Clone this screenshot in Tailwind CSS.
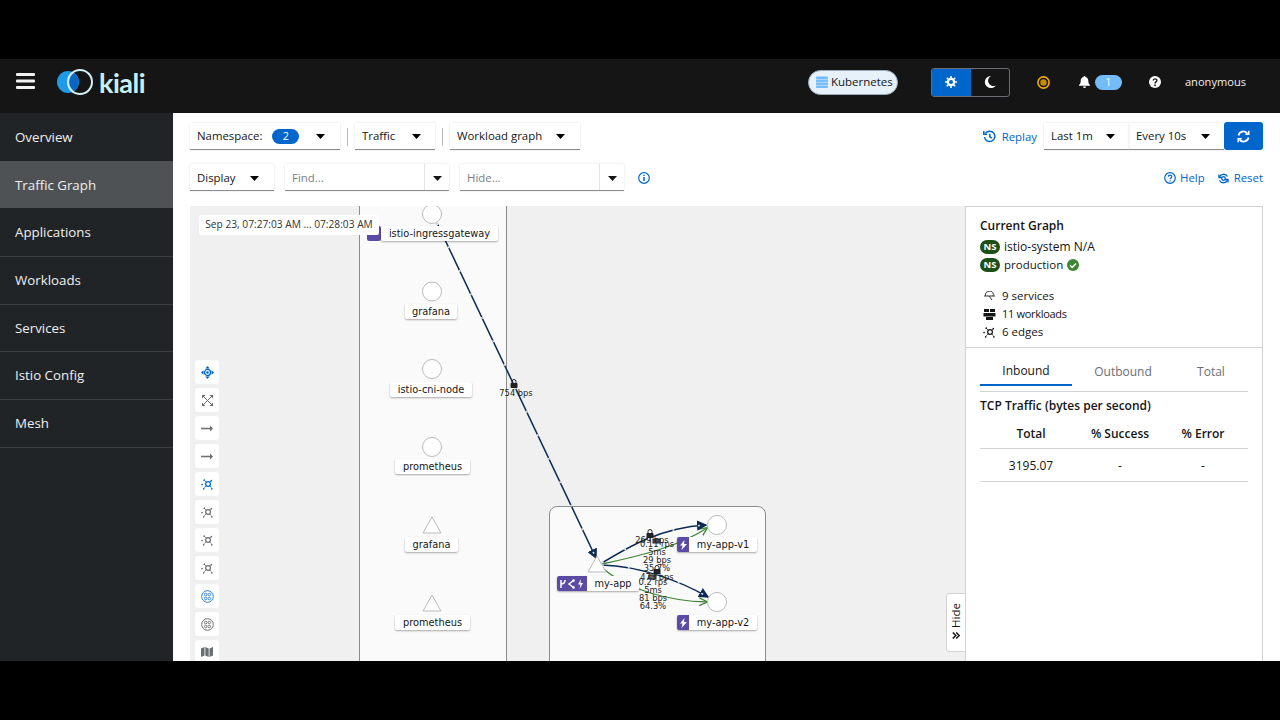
<!DOCTYPE html>
<html lang="en">
  <head>
    <meta charset="UTF-8" />
    <title>Kiali</title>
    <script src="https://cdn.jsdelivr.net/npm/@tailwindcss/browser@4"></script>
  </head>
  <body class="bg-black w-[1280px] h-[720px] overflow-hidden font-['Open_Sans',sans-serif] text-[#151515]">
    <div class="mt-[59px] h-[602px] flex flex-col overflow-hidden">
      <!-- Masthead -->
      <header class="h-[54px] shrink-0 bg-[#151515] flex items-center text-white pb-[8px]">
        <svg class="ml-[16px] -mt-[2px] w-[19px] h-[16px]" viewBox="0 0 19 16" fill="#f2f2f2"><rect width="19" height="3" rx="1"/><rect y="6.500" width="19" height="3" rx="1"/><rect y="13" width="19" height="3" rx="1"/></svg>
        <svg class="ml-[21px] w-[38px] h-[28px]" viewBox="0 0 38 28">
          <circle cx="12" cy="14" r="11" fill="#1e9be8"/>
          <path d="M18 5a11 11 0 0 1 0 18a11 11 0 0 1 0-18z" fill="#0a66c2"/>
          <circle cx="24" cy="14" r="12" fill="none" stroke="#d3f1f7" stroke-width="2"/>
        </svg>
        <span class="ml-[5px] text-[27px] leading-none font-bold text-[#c8f0f8] tracking-[-0.5px] font-['Lato',sans-serif]">kiali</span>
        <div class="ml-auto flex items-center">
          <div class="w-[90px] h-[25px] rounded-full bg-[#e7f1fa] border border-[#9ab] flex items-center pl-[7px] gap-[3px] text-[#151515] text-[11.500px]">
            <svg class="w-[12px] h-[12px]" viewBox="0 0 12 12" fill="#73bcf7"><rect width="12" height="2.400" y="0.500" rx="1"/><rect width="12" height="2.400" y="3.500"/><rect width="12" height="2.400" y="6.500"/><rect width="12" height="2.400" y="9.500" rx="1"/></svg>
            Kubernetes
          </div>
          <div class="ml-[33px] w-[79px] h-[29px] flex rounded-[3px] border border-[#6a6e73] overflow-hidden">
            <div class="w-[39px] bg-[#0066cc] flex items-center justify-center">
              <svg class="w-[12px] h-[12px]" viewBox="0 0 12 12"><circle cx="6" cy="6" r="3.200" fill="none" stroke="#fff" stroke-width="2"/><path d="M6 0v12M0 6h12M1.800 1.800l8.400 8.400M10.200 1.800l-8.400 8.400" stroke="#fff" stroke-width="1.600"/><circle cx="6" cy="6" r="2" fill="#0066cc"/></svg>
            </div>
            <div class="flex-1 flex items-center justify-center">
              <svg class="w-[12px] h-[12px]" viewBox="0 0 12 12"><path d="M7 0a6 6 0 1 0 4.800 9.400A5 5 0 0 1 7 0z" fill="#fff"/></svg>
            </div>
          </div>
          <svg class="ml-[27px] w-[13px] h-[13px]" viewBox="0 0 13 13"><circle cx="6.500" cy="6.500" r="5.600" fill="none" stroke="#f0ab00" stroke-width="1.600"/><circle cx="6.500" cy="6.500" r="3.200" fill="#c58c00"/></svg>
          <svg class="ml-[29px] w-[11px] h-[12px]" viewBox="0 0 11 12" fill="#fff"><path d="M5.500 0a1 1 0 0 1 1 1c2 .4 2.800 2 2.800 4 0 2 .7 3 1.700 4v.8H0V9c1-1 1.700-2 1.700-4 0-2 .8-3.600 2.800-4a1 1 0 0 1 1-1zM4 10.500h3a1.500 1.500 0 0 1-3 0z"/></svg>
          <span class="ml-[5px] w-[27px] h-[15px] rounded-full bg-[#73bcf7] text-white text-[10px] flex items-center justify-center">1</span>
          <svg class="ml-[27px] w-[12px] h-[12px]" viewBox="0 0 12 12"><circle cx="6" cy="6" r="6" fill="#fff"/><path d="M4.200 4.600c0-2.300 3.700-2.300 3.700-.1 0 1.400-1.900 1.400-1.900 3" fill="none" stroke="#151515" stroke-width="1.400"/><rect x="5.200" y="8.500" width="1.600" height="1.600" fill="#151515"/></svg>
          <span class="ml-[24px] mr-[34px] text-[11.100px] text-[#f0f0f0]">anonymous</span>
        </div>
      </header>

      <div class="flex-1 flex min-h-0">
        <!-- Sidebar -->
        <nav class="w-[173px] shrink-0 bg-[#212427] text-[13.300px] text-[#f0f0f0]">
          <div class="h-[48px] pl-[15px] pt-[2px] flex items-center">Overview</div>
          <div class="h-[47px] pl-[15px] pt-[2px] flex items-center bg-[#4f5255]">Traffic Graph</div>
          <div class="h-[49px] pl-[15px] pt-[2px] flex items-center border-b border-[#3c3f42]">Applications</div>
          <div class="h-[48px] pl-[15px] pt-[1px] flex items-center border-b border-[#3c3f42]">Workloads</div>
          <div class="h-[47px] pl-[15px] pt-[1px] flex items-center border-b border-[#3c3f42]">Services</div>
          <div class="h-[48px] pl-[15px] pt-[1px] flex items-center border-b border-[#3c3f42]">Istio Config</div>
          <div class="h-[48px] pl-[15px] pt-[1px] flex items-center border-b border-[#3c3f42]">Mesh</div>
        </nav>

        <main class="flex-1 bg-white flex flex-col pl-[17px] pr-[17px] min-w-0">
          <!-- Toolbar row 1 -->
          <div class="h-[27px] mt-[10px] flex items-stretch text-[11.400px]">
            <div class="w-[150px] border-b border-[#8a8d90] shadow-[0_0_2px_#ddd] flex items-center pl-[7px]">
              Namespace:
              <span class="ml-[10px] w-[27px] h-[15px] rounded-full bg-[#0066cc] text-white text-[11px] flex items-center justify-center">2</span>
              <svg class="ml-[17px] w-[9px] h-[5px]" viewBox="0 0 9 5"><path d="M0 0h9L4.500 5z"/></svg>
            </div>
            <div class="ml-[7px] mr-[7px] w-px h-[18px] self-center bg-[#b8bbbe]"></div>
            <div class="w-[80px] border-b border-[#8a8d90] shadow-[0_0_2px_#ddd] flex items-center pl-[7px]">
              Traffic
              <svg class="ml-auto mr-[14px] w-[9px] h-[5px]" viewBox="0 0 9 5"><path d="M0 0h9L4.500 5z"/></svg>
            </div>
            <div class="ml-[7px] mr-[7px] w-px h-[18px] self-center bg-[#b8bbbe]"></div>
            <div class="w-[130px] border-b border-[#8a8d90] shadow-[0_0_2px_#ddd] flex items-center pl-[7px]">
              Workload graph
              <svg class="ml-auto mr-[15px] w-[9px] h-[5px]" viewBox="0 0 9 5"><path d="M0 0h9L4.500 5z"/></svg>
            </div>
            <div class="ml-auto flex items-center text-[#0066cc] gap-[6px] mr-[7px]">
              <svg class="w-[13px] h-[13px]" viewBox="0 0 13 13" fill="none" stroke="#0066cc" stroke-width="1.500"><path d="M2.500 3.200A5.200 5.200 0 1 1 1.500 7"/><path d="M.8 1v3.200H4" /><path d="M6.800 3.800v3l2 1.200"/></svg>
              Replay
            </div>
            <div class="w-[85px] border-b border-[#8a8d90] shadow-[0_0_2px_#ddd] flex items-center pl-[7px]">
              Last 1m
              <svg class="ml-auto mr-[14px] w-[9px] h-[5px]" viewBox="0 0 9 5"><path d="M0 0h9L4.500 5z"/></svg>
            </div>
            <div class="w-[95px] border-b border-[#8a8d90] shadow-[0_0_2px_#ddd] flex items-center pl-[7px]">
              Every 10s
              <svg class="ml-auto mr-[14px] w-[9px] h-[5px]" viewBox="0 0 9 5"><path d="M0 0h9L4.500 5z"/></svg>
            </div>
            <div class="w-[39px] -mt-[1px] bg-[#0066cc] rounded-[3px] flex items-center justify-center">
              <svg class="w-[13px] h-[13px]" viewBox="0 0 13 13" fill="none" stroke="#fff" stroke-width="1.800"><path d="M1.500 5.500A5 5 0 0 1 10.500 3.500"/><path d="M11.500 7.500A5 5 0 0 1 2.500 9.500"/><path d="M11.800 .8v3.500H8.300" stroke-width="1.500"/><path d="M1.200 12.200V8.700h3.500" stroke-width="1.500"/></svg>
            </div>
          </div>

          <!-- Toolbar row 2 -->
          <div class="h-[27px] mt-[14px] flex items-stretch text-[11.400px]">
            <div class="w-[84px] border-b border-[#8a8d90] shadow-[0_0_2px_#ddd] flex items-center pl-[7px] pt-[2px]">
              Display
              <svg class="ml-auto mr-[15px] w-[9px] h-[5px]" viewBox="0 0 9 5"><path d="M0 0h9L4.500 5z"/></svg>
            </div>
            <div class="ml-[11px] w-[164px] border-b border-[#8a8d90] shadow-[0_0_2px_#ddd] flex items-center pl-[7px] text-[#7b7e81]">
              <span class="pt-[2px]">Find...</span>
              <div class="ml-auto w-[25px] h-full border-l border-[#e4e4e4] flex items-center justify-center pt-[2px]">
                <svg class="w-[9px] h-[5px]" viewBox="0 0 9 5"><path d="M0 0h9L4.500 5z" fill="#151515"/></svg>
              </div>
            </div>
            <div class="ml-[11px] w-[164px] border-b border-[#8a8d90] shadow-[0_0_2px_#ddd] flex items-center pl-[7px] text-[#7b7e81]">
              <span class="pt-[2px]">Hide...</span>
              <div class="ml-auto w-[25px] h-full border-l border-[#e4e4e4] flex items-center justify-center pt-[2px]">
                <svg class="w-[9px] h-[5px]" viewBox="0 0 9 5"><path d="M0 0h9L4.500 5z" fill="#151515"/></svg>
              </div>
            </div>
            <svg class="ml-[14px] self-center mt-[1px] w-[12px] h-[12px]" viewBox="0 0 12 12" fill="none" stroke="#0066cc" stroke-width="1.200"><circle cx="6" cy="6" r="5.300"/><path d="M6 5v4M6 2.800v1.200" stroke-width="1.500"/></svg>
            <div class="ml-auto flex items-center gap-[4px] text-[#0066cc] pt-[1px]">
              <svg class="w-[12px] h-[12px]" viewBox="0 0 12 12" fill="none" stroke="#0066cc" stroke-width="1.200"><circle cx="6" cy="6" r="5.300"/><path d="M4.300 4.700c0-2.200 3.500-2.200 3.500-.1 0 1.300-1.800 1.300-1.800 2.600M6 8.200v1.200"/></svg>
              Help
              <svg class="ml-[8px] w-[13px] h-[13px]" viewBox="0 0 13 13" fill="none" stroke="#0066cc" stroke-width="1.300"><path d="M2 2.500v3h3M11 10.500v-3H8"/><path d="M2.300 5.500A4.500 4.500 0 0 1 10.500 4.500M10.700 7.500A4.500 4.500 0 0 1 2.500 8.500"/><circle cx="6.500" cy="6.500" r="1.800"/></svg>
              Reset
            </div>
          </div>

          <!-- Graph + side panel -->
          <div class="mt-[15px] flex-1 flex min-h-0">
            <div class="relative flex-1 bg-[#f0f0f0] overflow-hidden">
              <!-- namespace boxes -->
              <div class="absolute left-[169px] top-[-20px] w-[148px] h-[600px] bg-[#fafafa] border-x-[1.500px] border-[#8a8d90]"></div>
              <div class="absolute left-[359px] top-[300px] w-[217px] h-[300px] bg-[#fafafa] border-[1.500px] border-[#8a8d90] rounded-[8px]"></div>

              <!-- edges and nodes -->
              <svg class="absolute left-0 top-0 w-[775px] h-[455px]" viewBox="0 0 775 455">
                <defs>
                  <marker id="navy" markerWidth="7" markerHeight="7" refX="6" refY="3.500" orient="auto"><path d="M0 0L7 3.500L0 7z" fill="#0b2a52"/></marker>
                  <marker id="green" markerWidth="7" markerHeight="7" refX="6" refY="3.500" orient="auto"><path d="M0 .5L6.500 3.500L0 6.500" fill="none" stroke="#3e8635"/></marker>
                </defs>
                <path d="M247 17L406 352" stroke="#0b2a52" stroke-width="1.500" fill="none" marker-end="url(#navy)"/>
                <path d="M412 358C450 350 490 340 517 322" stroke="#3e8635" stroke-width="1.300" fill="none" marker-end="url(#green)"/>
                <path d="M412 362C440 385 480 395 517 396" stroke="#3e8635" stroke-width="1.300" fill="none" marker-end="url(#green)"/>
                <path d="M412 357C440 340 470 322 516 319" stroke="#0b2a52" stroke-width="1.500" fill="none" marker-end="url(#navy)"/>
                <path d="M412 359C450 360 490 375 518 391" stroke="#0b2a52" stroke-width="1.500" fill="none" marker-end="url(#navy)"/>
                <!-- moving traffic dots -->
                <g fill="none" stroke="#dfe5ee" stroke-width="1.500" stroke-dasharray="2 24">
                  <path d="M247 17L406 352"/>
                  <path d="M412 357C440 340 470 322 516 319"/>
                  <path d="M412 359C450 360 490 375 518 391"/>
                </g>
                <g fill="#fff" stroke="#b8bbbe">
                  <circle cx="242" cy="8" r="9.500"/>
                  <circle cx="242" cy="85.500" r="9.500"/>
                  <circle cx="242" cy="163" r="9.500"/>
                  <circle cx="242" cy="241" r="9.500"/>
                  <path d="M242 311l9 16h-18z"/>
                  <path d="M242 389l9 16h-18z"/>
                  <path d="M407 350l9 16h-18z"/>
                  <circle cx="527" cy="319" r="9.500"/>
                  <circle cx="527" cy="396" r="9.500"/>
                </g>
              </svg>

              <!-- node labels -->
              <div class="font-['DejaVu_Sans',sans-serif] text-[9.800px] text-[#151515]">
                <div class="absolute left-[177px] top-[20px] w-[14px] h-[15px] rounded-[2px] bg-[#5c4ba5]"></div>
                <div class="absolute left-[191px] top-[20px] w-[117px] h-[15px] pt-[1px] bg-white rounded-[2px] shadow-[0_1px_2px_#0005] flex items-center justify-center">istio-ingressgateway</div>
                <div class="absolute left-[215px] top-[98px] w-[52px] h-[15px] pt-[1px] bg-white rounded-[2px] shadow-[0_1px_2px_#0005] flex items-center justify-center">grafana</div>
                <div class="absolute left-[200px] top-[176px] w-[82px] h-[15px] pt-[1px] bg-white rounded-[2px] shadow-[0_1px_2px_#0005] flex items-center justify-center">istio-cni-node</div>
                <div class="absolute left-[205px] top-[253px] w-[75px] h-[15px] pt-[1px] bg-white rounded-[2px] shadow-[0_1px_2px_#0005] flex items-center justify-center">prometheus</div>
                <div class="absolute left-[215px] top-[331px] w-[53px] h-[15px] pt-[1px] bg-white rounded-[2px] shadow-[0_1px_2px_#0005] flex items-center justify-center">grafana</div>
                <div class="absolute left-[205px] top-[409px] w-[75px] h-[15px] pt-[1px] bg-white rounded-[2px] shadow-[0_1px_2px_#0005] flex items-center justify-center">prometheus</div>
                <!-- my-app -->
                <div class="absolute left-[367px] top-[370px] w-[82px] h-[15px] bg-white rounded-[2px] shadow-[0_1px_2px_#0005] flex items-center">
                  <span class="w-[30px] h-full bg-[#5c4ba5] rounded-l-[2px] flex items-center justify-center">
                    <svg class="w-[26px] h-[10px]" viewBox="0 0 26 10" fill="#fff" stroke="#fff" stroke-width="1.500"><path d="M2 1v8M6 1c0 3-1 4-4 4" fill="none"/><path d="M14.500 1.500L10 5l4.500 3.500" fill="none"/><circle cx="14.500" cy="1.500" r=".6"/><circle cx="14.500" cy="8.500" r=".6"/><path d="M22 0l-3 5.500h2.500l-1 4.500l3.500-6h-2.500z" stroke="none"/></svg>
                  </span>
                  <span class="flex-1 text-center pt-[1px]">my-app</span>
                </div>
                <div class="absolute left-[487px] top-[331px] w-[80px] h-[15px] bg-white rounded-[2px] shadow-[0_1px_2px_#0005] flex items-center">
                  <span class="w-[12px] h-full bg-[#5c4ba5] rounded-l-[2px] flex items-center justify-center">
                    <svg class="w-[7px] h-[10px]" viewBox="0 0 7 10"><path d="M4.500 0L0 5.500h2.500L1.500 10L7 4H4z" fill="#fff"/></svg>
                  </span>
                  <span class="flex-1 text-center pt-[1px]">my-app-v1</span>
                </div>
                <div class="absolute left-[487px] top-[409px] w-[80px] h-[15px] bg-white rounded-[2px] shadow-[0_1px_2px_#0005] flex items-center">
                  <span class="w-[12px] h-full bg-[#5c4ba5] rounded-l-[2px] flex items-center justify-center">
                    <svg class="w-[7px] h-[10px]" viewBox="0 0 7 10"><path d="M4.500 0L0 5.500h2.500L1.500 10L7 4H4z" fill="#fff"/></svg>
                  </span>
                  <span class="flex-1 text-center pt-[1px]">my-app-v2</span>
                </div>
              </div>

              <!-- edge lock icons -->
              <svg class="absolute left-0 top-0 w-[775px] h-[455px]" viewBox="0 0 775 455">
                <g fill="#222" stroke="#222">
                  <rect x="320.500" y="177" width="7" height="5" rx=".8" stroke="none"/><path d="M322 177v-1.500a2 2 0 0 1 4 0v1.500" fill="none"/>
                  <rect x="456.500" y="327" width="7" height="5" rx=".8" stroke="none"/><path d="M458 327v-1.500a2 2 0 0 1 4 0v1.500" fill="none"/>
                  <rect x="463" y="333" width="7" height="4" stroke="#222" fill="#666"/>
                  <rect x="463.500" y="363" width="7" height="5" rx=".8" stroke="none"/><path d="M465 363v-1.500a2 2 0 0 1 4 0v1.500" fill="none"/>
                  <rect x="459" y="369" width="7" height="4" stroke="#222" fill="#666"/>
                </g>
              </svg>

              <!-- edge labels -->
              <div class="font-['DejaVu_Sans',sans-serif] text-[8.300px] leading-[8px] text-[#222] text-center">
                <div class="absolute left-[301px] top-[183px] w-[50px]">754 bps</div>
                <div class="absolute left-[437px] top-[330px] w-[50px]">269 bps</div>
                <div class="absolute left-[442px] top-[334px] w-[50px]">0.11 rps<br />5ms<br />29 bps<br />35.7%</div>
                <div class="absolute left-[442px] top-[367px] w-[50px]">473 bps</div>
                <div class="absolute left-[438px] top-[372px] w-[50px]">0.2 rps<br />5ms<br />81 bps<br />64.3%</div>
              </div>

              <!-- time range tag -->
              <div class="absolute left-[9px] top-[9px] w-[180px] h-[20px] bg-white rounded-[2px] text-[10.200px] flex items-center justify-center text-[#333]">Sep 23, 07:27:03 AM ... 07:28:03 AM</div>

              <!-- graph toolbar -->
              <div class="absolute left-[5px] top-[154px] flex flex-col gap-[4px]">
                <div class="w-[24px] h-[24px] bg-white rounded-[3px] flex items-center justify-center">
                  <svg class="w-[13px] h-[13px]" viewBox="0 0 12 12" fill="#06c"><path d="M6 0l2 2.300H4zM6 12l2-2.300H4zM0 6l2.300-2v4zM12 6l-2.300-2v4z"/><circle cx="6" cy="6" r="2.800" fill="none" stroke="#06c" stroke-width="1.200"/><circle cx="6" cy="6" r="1.200"/></svg>
                </div>
                <div class="w-[24px] h-[24px] bg-white rounded-[3px] flex items-center justify-center">
                  <svg class="w-[11px] h-[11px]" viewBox="0 0 11 11" fill="#6a6e73" stroke="#6a6e73"><path d="M1 1l9 9M10 1L1 10" stroke-width="1"/><path d="M0 0h3.500L0 3.500zM11 0H7.500L11 3.500zM0 11h3.500L0 7.500zM11 11H7.500L11 7.500z" stroke="none"/></svg>
                </div>
                <div class="w-[24px] h-[24px] bg-white rounded-[3px] flex items-center justify-center">
                  <svg class="w-[12px] h-[7px]" viewBox="0 0 12 7" fill="#6a6e73"><path d="M0 2.700h9V.5L12 3.500L9 6.500V4.300H0z"/></svg>
                </div>
                <div class="w-[24px] h-[24px] bg-white rounded-[3px] flex items-center justify-center">
                  <svg class="w-[12px] h-[7px]" viewBox="0 0 12 7" fill="#6a6e73"><path d="M0 2.700h9V.5L12 3.500L9 6.500V4.300H0z"/></svg>
                </div>
                <div class="w-[24px] h-[24px] bg-white rounded-[3px] flex items-center justify-center">
                  <svg class="w-[13px] h-[13px]" viewBox="0 0 12 12" fill="#06c" stroke="#06c"><circle cx="6.500" cy="5.500" r="2.200" fill="none" stroke-width="1.100"/><path d="M5 4L3.500 2.500M8 4L9 3M5 7L3 9M8 7L9.500 9" stroke-width=".7"/><circle cx="3" cy="2" r=".8" stroke="none"/><circle cx="9.500" cy="2.500" r=".8" stroke="none"/><circle cx="1" cy="6" r=".8" stroke="none"/><circle cx="2.500" cy="10" r=".8" stroke="none"/><circle cx="10" cy="10" r=".8" stroke="none"/></svg>
                </div>
                <div class="w-[24px] h-[24px] bg-white rounded-[3px] flex items-center justify-center">
                  <svg class="w-[13px] h-[13px]" viewBox="0 0 12 12" fill="#6a6e73" stroke="#6a6e73"><circle cx="6.500" cy="5.500" r="2.200" fill="none" stroke-width="1.100"/><path d="M5 4L3.500 2.500M8 4L9 3M5 7L3 9M8 7L9.500 9" stroke-width=".7"/><circle cx="3" cy="2" r=".8" stroke="none"/><circle cx="9.500" cy="2.500" r=".8" stroke="none"/><circle cx="1" cy="6" r=".8" stroke="none"/><circle cx="2.500" cy="10" r=".8" stroke="none"/><circle cx="10" cy="10" r=".8" stroke="none"/></svg>
                </div>
                <div class="w-[24px] h-[24px] bg-white rounded-[3px] flex items-center justify-center">
                  <svg class="w-[13px] h-[13px]" viewBox="0 0 12 12" fill="#6a6e73" stroke="#6a6e73"><circle cx="6.500" cy="5.500" r="2.200" fill="none" stroke-width="1.100"/><path d="M5 4L3.500 2.500M8 4L9 3M5 7L3 9M8 7L9.500 9" stroke-width=".7"/><circle cx="3" cy="2" r=".8" stroke="none"/><circle cx="9.500" cy="2.500" r=".8" stroke="none"/><circle cx="1" cy="6" r=".8" stroke="none"/><circle cx="2.500" cy="10" r=".8" stroke="none"/><circle cx="10" cy="10" r=".8" stroke="none"/></svg>
                </div>
                <div class="w-[24px] h-[24px] bg-white rounded-[3px] flex items-center justify-center">
                  <svg class="w-[13px] h-[13px]" viewBox="0 0 12 12" fill="#6a6e73" stroke="#6a6e73"><circle cx="6.500" cy="5.500" r="2.200" fill="none" stroke-width="1.100"/><path d="M5 4L3.500 2.500M8 4L9 3M5 7L3 9M8 7L9.500 9" stroke-width=".7"/><circle cx="3" cy="2" r=".8" stroke="none"/><circle cx="9.500" cy="2.500" r=".8" stroke="none"/><circle cx="1" cy="6" r=".8" stroke="none"/><circle cx="2.500" cy="10" r=".8" stroke="none"/><circle cx="10" cy="10" r=".8" stroke="none"/></svg>
                </div>
                <div class="w-[24px] h-[24px] bg-white rounded-[3px] flex items-center justify-center">
                  <svg class="w-[13px] h-[13px]" viewBox="0 0 13 13" fill="none" stroke="#2b7fd0"><circle cx="6.500" cy="6.500" r="5.800"/><g fill="none" stroke-width=".9"><circle cx="4.700" cy="4.500" r="1.300"/><circle cx="8.300" cy="4.500" r="1.300"/><circle cx="4.700" cy="8.500" r="1.300"/><circle cx="8.300" cy="8.500" r="1.300"/></g></svg>
                </div>
                <div class="w-[24px] h-[24px] bg-white rounded-[3px] flex items-center justify-center">
                  <svg class="w-[13px] h-[13px]" viewBox="0 0 13 13" fill="none" stroke="#6a6e73"><circle cx="6.500" cy="6.500" r="5.800"/><g fill="none" stroke-width=".9"><circle cx="4.700" cy="4.500" r="1.300"/><circle cx="8.300" cy="4.500" r="1.300"/><circle cx="4.700" cy="8.500" r="1.300"/><circle cx="8.300" cy="8.500" r="1.300"/></g></svg>
                </div>
                <div class="w-[24px] h-[24px] bg-white rounded-[3px] flex items-center justify-center">
                  <svg class="w-[12px] h-[10px]" viewBox="0 0 12 10" fill="#6a6e73"><path d="M0 1.500l3.500-1.500v8.500L0 10zM4.300 0l3.400 1.500V10L4.300 8.500zM8.500 1.500L12 0v8.500L8.500 10z"/></svg>
                </div>
              </div>

              <!-- hide tab -->
              <div class="absolute left-[756px] top-[387px] w-[20px] h-[59px] bg-white border border-[#d2d2d2] rounded-l-[3px] flex flex-col items-center justify-end pb-[12px] gap-[4px]">
                <span class="text-[11.500px] leading-none [writing-mode:vertical-rl] rotate-180">Hide</span>
                <svg class="w-[8px] h-[7px]" viewBox="0 0 8 7" fill="none" stroke="#151515" stroke-width="1.500"><path d="M.8.500L3.800 3.500L.8 6.500M4.200.500L7.200 3.500L4.200 6.500"/></svg>
              </div>
            </div>

            <!-- Side panel -->
            <aside class="w-[298px] shrink-0 bg-white border-x border-t border-[#d2d2d2] text-[12px] flex flex-col">
              <div class="h-[141px] px-[14px] pt-[10px] border-b border-[#d2d2d2]">
                <div class="font-semibold leading-[17px]">Current Graph</div>
                <div class="mt-[4px] flex items-center h-[18px] gap-[4px]">
                  <span class="w-[20px] h-[14px] rounded-full bg-[#1e4f18] text-white text-[9.500px] font-bold flex items-center justify-center">NS</span>
                  istio-system N/A
                </div>
                <div class="flex items-center h-[18px] gap-[4px] text-[11.500px]">
                  <span class="w-[20px] h-[14px] rounded-full bg-[#1e4f18] text-white text-[9.500px] font-bold flex items-center justify-center">NS</span>
                  production
                  <svg class="w-[12px] h-[12px]" viewBox="0 0 12 12"><circle cx="6" cy="6" r="6" fill="#3e8635"/><path d="M3 6.200l2.200 2.200L9 4.400" fill="none" stroke="#fff" stroke-width="1.500"/></svg>
                </div>
                <div class="mt-[13px] flex items-center h-[18px] gap-[6px] pl-[3px] text-[11.500px]">
                  <svg class="w-[13px] h-[10px]" viewBox="0 0 13 10" fill="none" stroke="#333"><path d="M1 5h11M2.500 5a4 4 0 0 1 8-1.500M9 9l-3-4M11 3.500l-1.500 1.500"/></svg>
                  9 services
                </div>
                <div class="flex items-center h-[18px] gap-[6px] pl-[3px] text-[11px] tracking-[-0.3px]">
                  <svg class="w-[13px] h-[12px]" viewBox="0 0 13 12" fill="#151515"><path d="M1 1h5v3H1zM7 1h5v3H7zM.5 5h12v3.500h-12zM3 9h7v3H3z"/></svg>
                  11 workloads
                </div>
                <div class="flex items-center h-[18px] gap-[6px] pl-[3px] text-[11.500px]">
                  <svg class="w-[13px] h-[13px]" viewBox="0 0 12 12" fill="#151515" stroke="#151515"><circle cx="6.500" cy="5.500" r="2.200" fill="none" stroke-width="1.100"/><path d="M5 4L3.500 2.500M8 4L9 3M5 7L3 9M8 7L9.500 9" stroke-width=".7"/><circle cx="3" cy="2" r=".8" stroke="none"/><circle cx="9.500" cy="2.500" r=".8" stroke="none"/><circle cx="1" cy="6" r=".8" stroke="none"/><circle cx="2.500" cy="10" r=".8" stroke="none"/><circle cx="10" cy="10" r=".8" stroke="none"/></svg>
                  6 edges
                </div>
              </div>

              <div class="mx-[14px] flex h-[44px] border-b border-[#d2d2d2] text-center">
                <div class="w-[92px] flex items-center justify-center border-b-[2px] border-[#0066cc] h-[38px] pt-[9px]">Inbound</div>
                <div class="w-[102px] flex items-center justify-center h-[38px] pt-[9px] text-[#6a6e73]">Outbound</div>
                <div class="flex-1 flex items-center justify-center h-[38px] pt-[9px] text-[#6a6e73]">Total</div>
              </div>
              <div class="mx-[14px] mt-[5px] font-semibold leading-[17px]">TCP Traffic (bytes per second)</div>
              <div class="mx-[14px] mt-[7px] grid grid-cols-[102px_76px_1fr] text-center">
                <div class="h-[28px] pb-[2px] font-semibold border-b border-[#d2d2d2] flex items-center justify-center">Total</div>
                <div class="h-[28px] pb-[2px] font-semibold border-b border-[#d2d2d2] flex items-center justify-center">% Success</div>
                <div class="h-[28px] pb-[2px] font-semibold border-b border-[#d2d2d2] flex items-center justify-center">% Error</div>
                <div class="h-[33px] pt-[1px] border-b border-[#d2d2d2] flex items-center justify-center">3195.07</div>
                <div class="h-[33px] pt-[1px] border-b border-[#d2d2d2] flex items-center justify-center">-</div>
                <div class="h-[33px] pt-[1px] border-b border-[#d2d2d2] flex items-center justify-center">-</div>
              </div>
            </aside>
          </div>
        </main>
      </div>
    </div>
  </body>
</html>
